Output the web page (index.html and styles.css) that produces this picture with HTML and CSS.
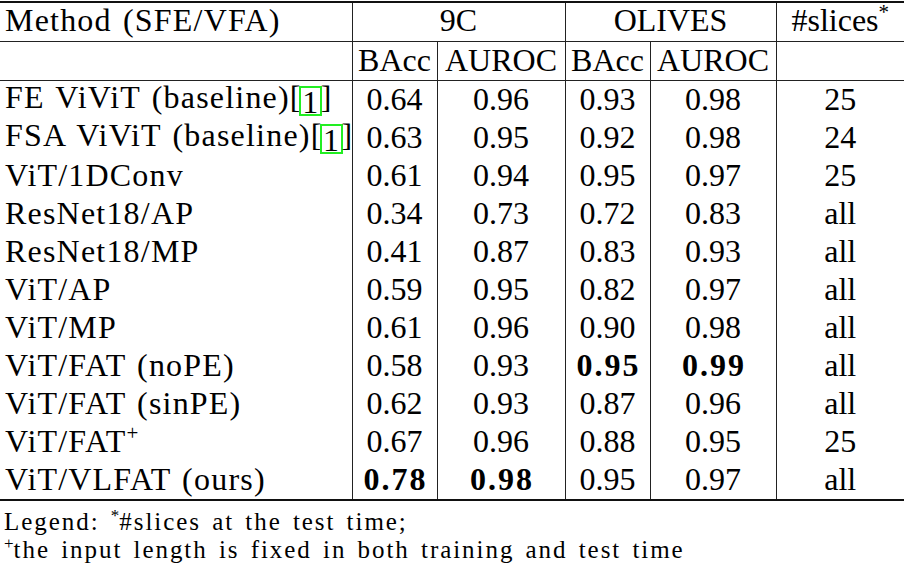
FILE: index.html
```html
<!DOCTYPE html>
<html>
<head>
<meta charset="utf-8">
<link rel="stylesheet" href="styles.css">
</head>
<body>
<div class="page">
<table class="results">
<colgroup>
<col class="c-method"><col class="c-a"><col class="c-b"><col class="c-c"><col class="c-d"><col class="c-e">
</colgroup>
<thead>
<tr class="h1">
<th class="method">Method (SFE/VFA)</th>
<th colspan="2" class="vl">9C</th>
<th colspan="2" class="vl">OLIVES</th>
<th class="vl">#slices<sup>*</sup></th>
</tr>
<tr class="h2">
<th></th>
<th class="vl">BAcc</th>
<th class="vl">AUROC</th>
<th class="vl">BAcc</th>
<th class="vl">AUROC</th>
<th class="vl"></th>
</tr>
</thead>
<tbody>
<tr><td class="method">FE ViViT (baseline)[<span class="cite">1</span>]</td><td class="vl">0.64</td><td class="vl">0.96</td><td class="vl">0.93</td><td class="vl">0.98</td><td class="vl">25</td></tr>
<tr><td class="method">FSA ViViT (baseline)[<span class="cite">1</span>]</td><td class="vl">0.63</td><td class="vl">0.95</td><td class="vl">0.92</td><td class="vl">0.98</td><td class="vl">24</td></tr>
<tr><td class="method">ViT/1DConv</td><td class="vl">0.61</td><td class="vl">0.94</td><td class="vl">0.95</td><td class="vl">0.97</td><td class="vl">25</td></tr>
<tr><td class="method">ResNet18/AP</td><td class="vl">0.34</td><td class="vl">0.73</td><td class="vl">0.72</td><td class="vl">0.83</td><td class="vl">all</td></tr>
<tr><td class="method">ResNet18/MP</td><td class="vl">0.41</td><td class="vl">0.87</td><td class="vl">0.83</td><td class="vl">0.93</td><td class="vl">all</td></tr>
<tr><td class="method">ViT/AP</td><td class="vl">0.59</td><td class="vl">0.95</td><td class="vl">0.82</td><td class="vl">0.97</td><td class="vl">all</td></tr>
<tr><td class="method">ViT/MP</td><td class="vl">0.61</td><td class="vl">0.96</td><td class="vl">0.90</td><td class="vl">0.98</td><td class="vl">all</td></tr>
<tr><td class="method">ViT/FAT (noPE)</td><td class="vl">0.58</td><td class="vl">0.93</td><td class="vl"><b>0.95</b></td><td class="vl"><b>0.99</b></td><td class="vl">all</td></tr>
<tr><td class="method">ViT/FAT (sinPE)</td><td class="vl">0.62</td><td class="vl">0.93</td><td class="vl">0.87</td><td class="vl">0.96</td><td class="vl">all</td></tr>
<tr><td class="method">ViT/FAT<sup>+</sup></td><td class="vl">0.67</td><td class="vl">0.96</td><td class="vl">0.88</td><td class="vl">0.95</td><td class="vl">25</td></tr>
<tr><td class="method">ViT/VLFAT (ours)</td><td class="vl"><b>0.78</b></td><td class="vl"><b>0.98</b></td><td class="vl">0.95</td><td class="vl">0.97</td><td class="vl">all</td></tr>
</tbody>
</table>
<div class="legend">
<p>Legend: <sup>*</sup>#slices at the test time;</p>
<p><sup>+</sup>the input length is fixed in both training and test time</p>
</div>
</div>
</body>
</html>
```
FILE: styles.css
```css
html, body {
  margin: 0;
  padding: 0;
  background: #fff;
}
.page {
  width: 904px;
  padding-top: 1px;
  font-family: "Liberation Serif", "DejaVu Serif", serif;
  color: #000;
}
.results {
  width: 904px;
  border-collapse: collapse;
  table-layout: fixed;
  font-size: 32px;
  border-top: 2px solid #111;
  border-bottom: 2px solid #111;
}
.c-method { width: 352px; }
.c-a { width: 85px; }
.c-b { width: 128px; }
.c-c { width: 85px; }
.c-d { width: 126px; }
.c-e { width: 128px; }
.results th, .results td {
  font-weight: normal;
  padding: 0 0 3px 0;
  text-align: center;
  white-space: nowrap;
  line-height: 30px;
}
.results .method {
  text-align: left;
  padding-left: 5px;
  letter-spacing: 1.2px;
  word-spacing: 2px;
}
.results .vl {
  border-left: 1px solid #222;
}
.h1 th { height: 34px; padding-bottom: 4px; border-bottom: 1px solid #222; }
.h2 th { height: 35px; border-bottom: 1px solid #222; }
.results tbody td { height: 35px; }
.results sup {
  font-size: 21px;
  line-height: 0;
  vertical-align: 12px;
  letter-spacing: 0;
}
.results b {
  font-weight: bold;
  letter-spacing: 2px;
  margin-right: -2px;
}
.cite {
  display: inline-block;
  width: 19px;
  height: 26px;
  line-height: 28px;
  text-align: center;
  letter-spacing: 0;
  border: 2px solid #2e2;
  vertical-align: -5px;
  margin-left: -3px;
  margin-right: -1px;
}
.legend {
  padding-left: 4px;
  padding-top: 7px;
  font-size: 25px;
  letter-spacing: 1.95px;
  word-spacing: 3px;
}
.legend p {
  margin: 0;
  line-height: 28px;
}
.legend sup {
  font-size: 17px;
  line-height: 0;
  vertical-align: 9px;
  letter-spacing: 0;
}
```
